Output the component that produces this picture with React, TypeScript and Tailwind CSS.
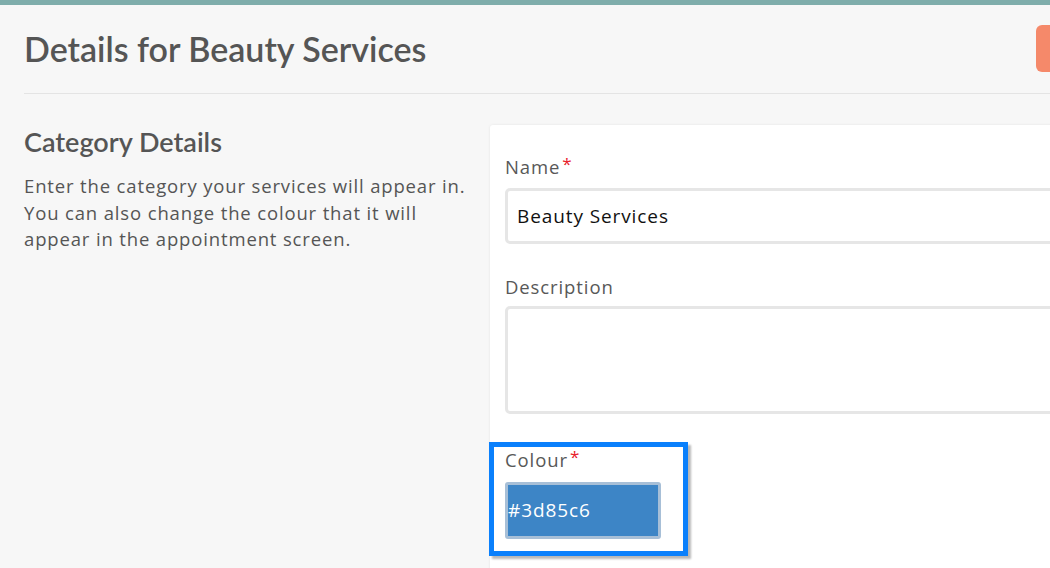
import React from "react";

function Req() {
  return <span className="relative top-[-4px] ml-[2px] text-[17px] tracking-normal text-[#e8202a]">*</span>;
}

export default function App() {
  return (
    <div className="w-[1050px] h-[568px] overflow-hidden bg-[#f7f7f7] font-['Open_Sans',sans-serif] text-[#555555]">
      <div className="h-[5px] bg-[#7fadab]" />
      <div className="w-[1300px] px-6">
        <div className="flex items-center justify-between pt-[20px] pb-[21px] border-b border-[#e4e4e4]">
          <h1 className="font-['Lato',sans-serif] text-[34px] font-semibold leading-[47px]">Details for Beauty Services</h1>
          <button className="w-[240px] h-[47px] rounded-[6px] bg-[#f5896a]" />
        </div>
        <div className="flex pt-[31px]">
          <div className="w-[466px] shrink-0 pr-[10px]">
            <h2 className="font-['Lato',sans-serif] text-[27px] font-semibold leading-[34px]">Category Details</h2>
            <p className="mt-[14px] text-[18.5px] leading-[26.5px] tracking-[0.85px] whitespace-nowrap">
              Enter the category your services will appear in.
              <br />
              You can also change the colour that it will
              <br />
              appear in the appointment screen.
            </p>
          </div>
          <div className="flex-1 h-[460px] bg-white rounded-tl-[3px] shadow-[0_0_3px_rgba(0,0,0,0.08)] pl-[15px] pr-6 pt-[29px]">
            <div>
              <label className="block text-[18.5px] leading-[26px] tracking-[0.9px] text-[#585858]">
                Name
                <Req />
              </label>
              <div className="mt-[7px] h-[56px] flex items-center border-[3px] border-[#e6e6e6] rounded-[5px] pl-[9px] text-[19px] tracking-[0.9px] text-[#111]">
                Beauty Services
              </div>
            </div>
            <div className="mt-[30px]">
              <label className="block text-[18.5px] leading-[26px] tracking-[0.9px] text-[#585858]">Description</label>
              <div className="mt-[6px] h-[108px] border-[3px] border-[#e6e6e6] rounded-[5px]" />
            </div>
            <div className="relative mt-[33px] w-[156px]">
              <label className="block text-[18.5px] leading-[26px] tracking-[0.9px] text-[#585858]">
                Colour
                <Req />
              </label>
              <div className="mt-[8px] h-[57px] flex items-center bg-[#3d85c6] border-[3px] border-[#a7bfd7] rounded-[3px] text-[19px] tracking-[0.9px] text-white">
                #3d85c6
              </div>
              <div className="absolute left-[-16px] top-[-5px] w-[199px] h-[114px] border-[5px] border-[#0a80fc] shadow-[3px_3px_2px_rgba(0,0,0,0.28)]" />
            </div>
          </div>
        </div>
      </div>
    </div>
  );
}
